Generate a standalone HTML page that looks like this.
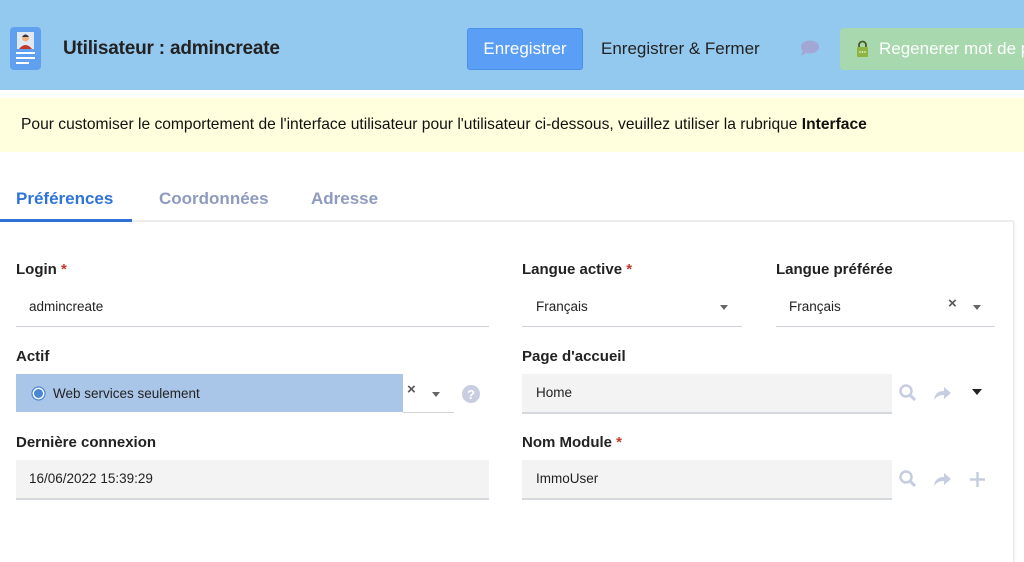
<!DOCTYPE html>
<html><head><meta charset="utf-8"><style>
*{box-sizing:border-box;margin:0;padding:0}
body{width:1024px;height:554px;overflow:hidden;background:#fff;font-family:"Liberation Sans",Arial,sans-serif;position:relative;color:#222}
.abs{position:absolute}
.hdr{left:0;top:0;width:1024px;height:90px;background:#94c9ef}
.title{left:63px;top:38px;font-size:19px;font-weight:bold;color:#222;letter-spacing:-0.2px}
.btn1{left:467px;top:28px;width:116px;height:42px;background:#5b9ef5;border:1px solid #4a8fe8;border-radius:3px;color:#fff;font-size:17px;text-align:center;line-height:40px}
.btn2{left:601px;top:39px;font-size:17px;color:#222}
.btn3{left:840px;top:28px;width:200px;height:42px;background:#a7d8ae;border-radius:4px;color:#fff;font-size:17px;line-height:42px;padding-left:39px;white-space:nowrap;overflow:hidden}
.banner{left:0;top:98px;width:1024px;height:54px;background:#ffffde;font-size:15.6px;line-height:54px;padding-left:21px;color:#111;white-space:nowrap}
.tab{top:189px;font-size:17px;font-weight:bold;color:#8e9bc0}
.card{left:0;top:222px;width:1014px;height:340px;border-right:1px solid #e6e6e6;box-shadow:1px 0 3px rgba(0,0,0,.06)}
.lbl{font-size:15px;font-weight:bold;color:#222}
.req{color:#c0392b}
.inp{font-size:13.5px;color:#222}
.line{height:1px;background:#cfd3d8}
.fill{background:#f3f3f3;border-bottom:2px solid #d5d8dd}
</style></head><body>
<div class="abs hdr"></div>
<svg class="abs" style="left:10px;top:27px" width="31" height="43" viewBox="0 0 31 43"><rect width="31" height="43" rx="4" fill="#5fa1ee"/><rect x="7" y="5" width="17" height="17" fill="#dfe9f5"/><circle cx="15.5" cy="11" r="3.5" fill="#f0b27a"/><path d="M12 10 q3.5-5 7 0 z" fill="#333"/><path d="M9 22 q6.5-8 13 0z" fill="#c0392b"/><rect x="6" y="25" width="19" height="2" fill="#fff"/><rect x="6" y="30" width="19" height="2" fill="#fff"/><rect x="6" y="35" width="13" height="2" fill="#fff"/></svg>
<div class="abs title">Utilisateur : admincreate</div>
<div class="abs btn1">Enregistrer</div>
<div class="abs btn2">Enregistrer &amp; Fermer</div>
<svg class="abs" style="left:800px;top:40px" width="19" height="17" viewBox="0 0 19 17"><ellipse cx="10" cy="7" rx="9" ry="6.5" fill="#a3a7d6"/><path d="M3 10 L1 16 L8 12z" fill="#a3a7d6"/></svg>
<div class="abs btn3">Regenerer mot de passe</div>
<svg class="abs" style="left:856px;top:40px" width="13" height="17" viewBox="0 0 13 17"><path d="M3 8 V5 a3.5 3.5 0 0 1 7 0 V8" stroke="#4a5a2a" stroke-width="1.8" fill="none"/><rect x="1" y="7" width="11" height="10" rx="1" fill="#8db540"/><circle cx="4" cy="12" r="0.8" fill="#fff"/><circle cx="6.5" cy="12" r="0.8" fill="#fff"/><circle cx="9" cy="12" r="0.8" fill="#fff"/></svg>
<div class="abs banner">Pour customiser le comportement de l'interface utilisateur pour l'utilisateur ci-dessous, veuillez utiliser la rubrique <b>Interface</b></div>
<div class="abs tab" style="left:16px;color:#2f74d8">Préférences</div>
<div class="abs tab" style="left:159px">Coordonnées</div>
<div class="abs tab" style="left:311px">Adresse</div>
<div class="abs" style="left:0;top:219px;width:132px;height:3px;background:#2f74d8"></div>
<div class="abs" style="left:132px;top:220px;width:882px;height:2px;background:#f1f1f3"></div>
<div class="abs card"></div>

<div class="abs lbl" style="left:16px;top:261px">Login <span class="req">*</span></div>
<div class="abs inp" style="left:29px;top:299px">admincreate</div>
<div class="abs line" style="left:16px;top:326px;width:473px"></div>

<div class="abs lbl" style="left:522px;top:261px">Langue active <span class="req">*</span></div>
<div class="abs inp" style="left:536px;top:299px">Français</div>
<div class="abs" style="left:720px;top:305px;border:4px solid transparent;border-top:5px solid #666"></div>
<div class="abs line" style="left:522px;top:326px;width:220px"></div>

<div class="abs lbl" style="left:776px;top:261px">Langue préférée</div>
<div class="abs inp" style="left:789px;top:299px">Français</div>
<div class="abs" style="left:948px;top:295px;font-size:15px;color:#555;font-weight:bold">×</div>
<div class="abs" style="left:973px;top:305px;border:4px solid transparent;border-top:5px solid #666"></div>
<div class="abs line" style="left:776px;top:326px;width:219px"></div>

<div class="abs lbl" style="left:16px;top:348px">Actif</div>
<div class="abs" style="left:16px;top:374px;width:387px;height:38px;background:#a9c6e8"></div>
<svg class="abs" style="left:31px;top:386px" width="15" height="15"><circle cx="7.5" cy="7.5" r="6.5" fill="#fff" stroke="#4a86d6" stroke-width="1.2"/><circle cx="7.5" cy="7.5" r="4.5" fill="#4a86d6"/></svg>
<div class="abs inp" style="left:53px;top:386px">Web services seulement</div>
<div class="abs" style="left:407px;top:381px;font-size:15px;color:#555;font-weight:bold">×</div>
<div class="abs" style="left:432px;top:392px;border:4px solid transparent;border-top:5px solid #666"></div>
<div class="abs line" style="left:403px;top:412px;width:51px"></div>
<svg class="abs" style="left:462px;top:385px" width="18" height="18"><circle cx="9" cy="9" r="9" fill="#c9cde0"/><text x="9" y="14" font-size="13" font-weight="bold" text-anchor="middle" fill="#fff" font-family="Liberation Sans">?</text></svg>

<div class="abs lbl" style="left:522px;top:348px">Page d'accueil</div>
<div class="abs fill" style="left:522px;top:374px;width:370px;height:40px"></div>
<div class="abs inp" style="left:536px;top:385px">Home</div>
<svg class="abs" style="left:899px;top:384px" width="18" height="18"><circle cx="7" cy="7" r="5.5" stroke="#c7cde0" stroke-width="2.5" fill="none"/><path d="M11 11 L16 16" stroke="#c7cde0" stroke-width="3"/></svg>
<svg class="abs" style="left:933px;top:385px" width="19" height="16"><path d="M1 15 C2 8 6 6 11 6 V2 L18 8 L11 14 V10 C7 10 4 11 1 15z" fill="#c7cde0"/></svg>
<div class="abs" style="left:972px;top:389px;border:5px solid transparent;border-top:6px solid #222"></div>

<div class="abs lbl" style="left:16px;top:434px">Dernière connexion</div>
<div class="abs fill" style="left:16px;top:460px;width:473px;height:40px"></div>
<div class="abs inp" style="left:29px;top:471px">16/06/2022 15:39:29</div>

<div class="abs lbl" style="left:522px;top:434px">Nom Module <span class="req">*</span></div>
<div class="abs fill" style="left:522px;top:460px;width:370px;height:40px"></div>
<div class="abs inp" style="left:536px;top:471px">ImmoUser</div>
<svg class="abs" style="left:899px;top:470px" width="18" height="18"><circle cx="7" cy="7" r="5.5" stroke="#c7cde0" stroke-width="2.5" fill="none"/><path d="M11 11 L16 16" stroke="#c7cde0" stroke-width="3"/></svg>
<svg class="abs" style="left:933px;top:471px" width="19" height="16"><path d="M1 15 C2 8 6 6 11 6 V2 L18 8 L11 14 V10 C7 10 4 11 1 15z" fill="#c7cde0"/></svg>
<svg class="abs" style="left:969px;top:471px" width="17" height="17"><path d="M8.5 1 V16 M1 8.5 H16" stroke="#c7cde0" stroke-width="2.5"/></svg>
</body></html>
